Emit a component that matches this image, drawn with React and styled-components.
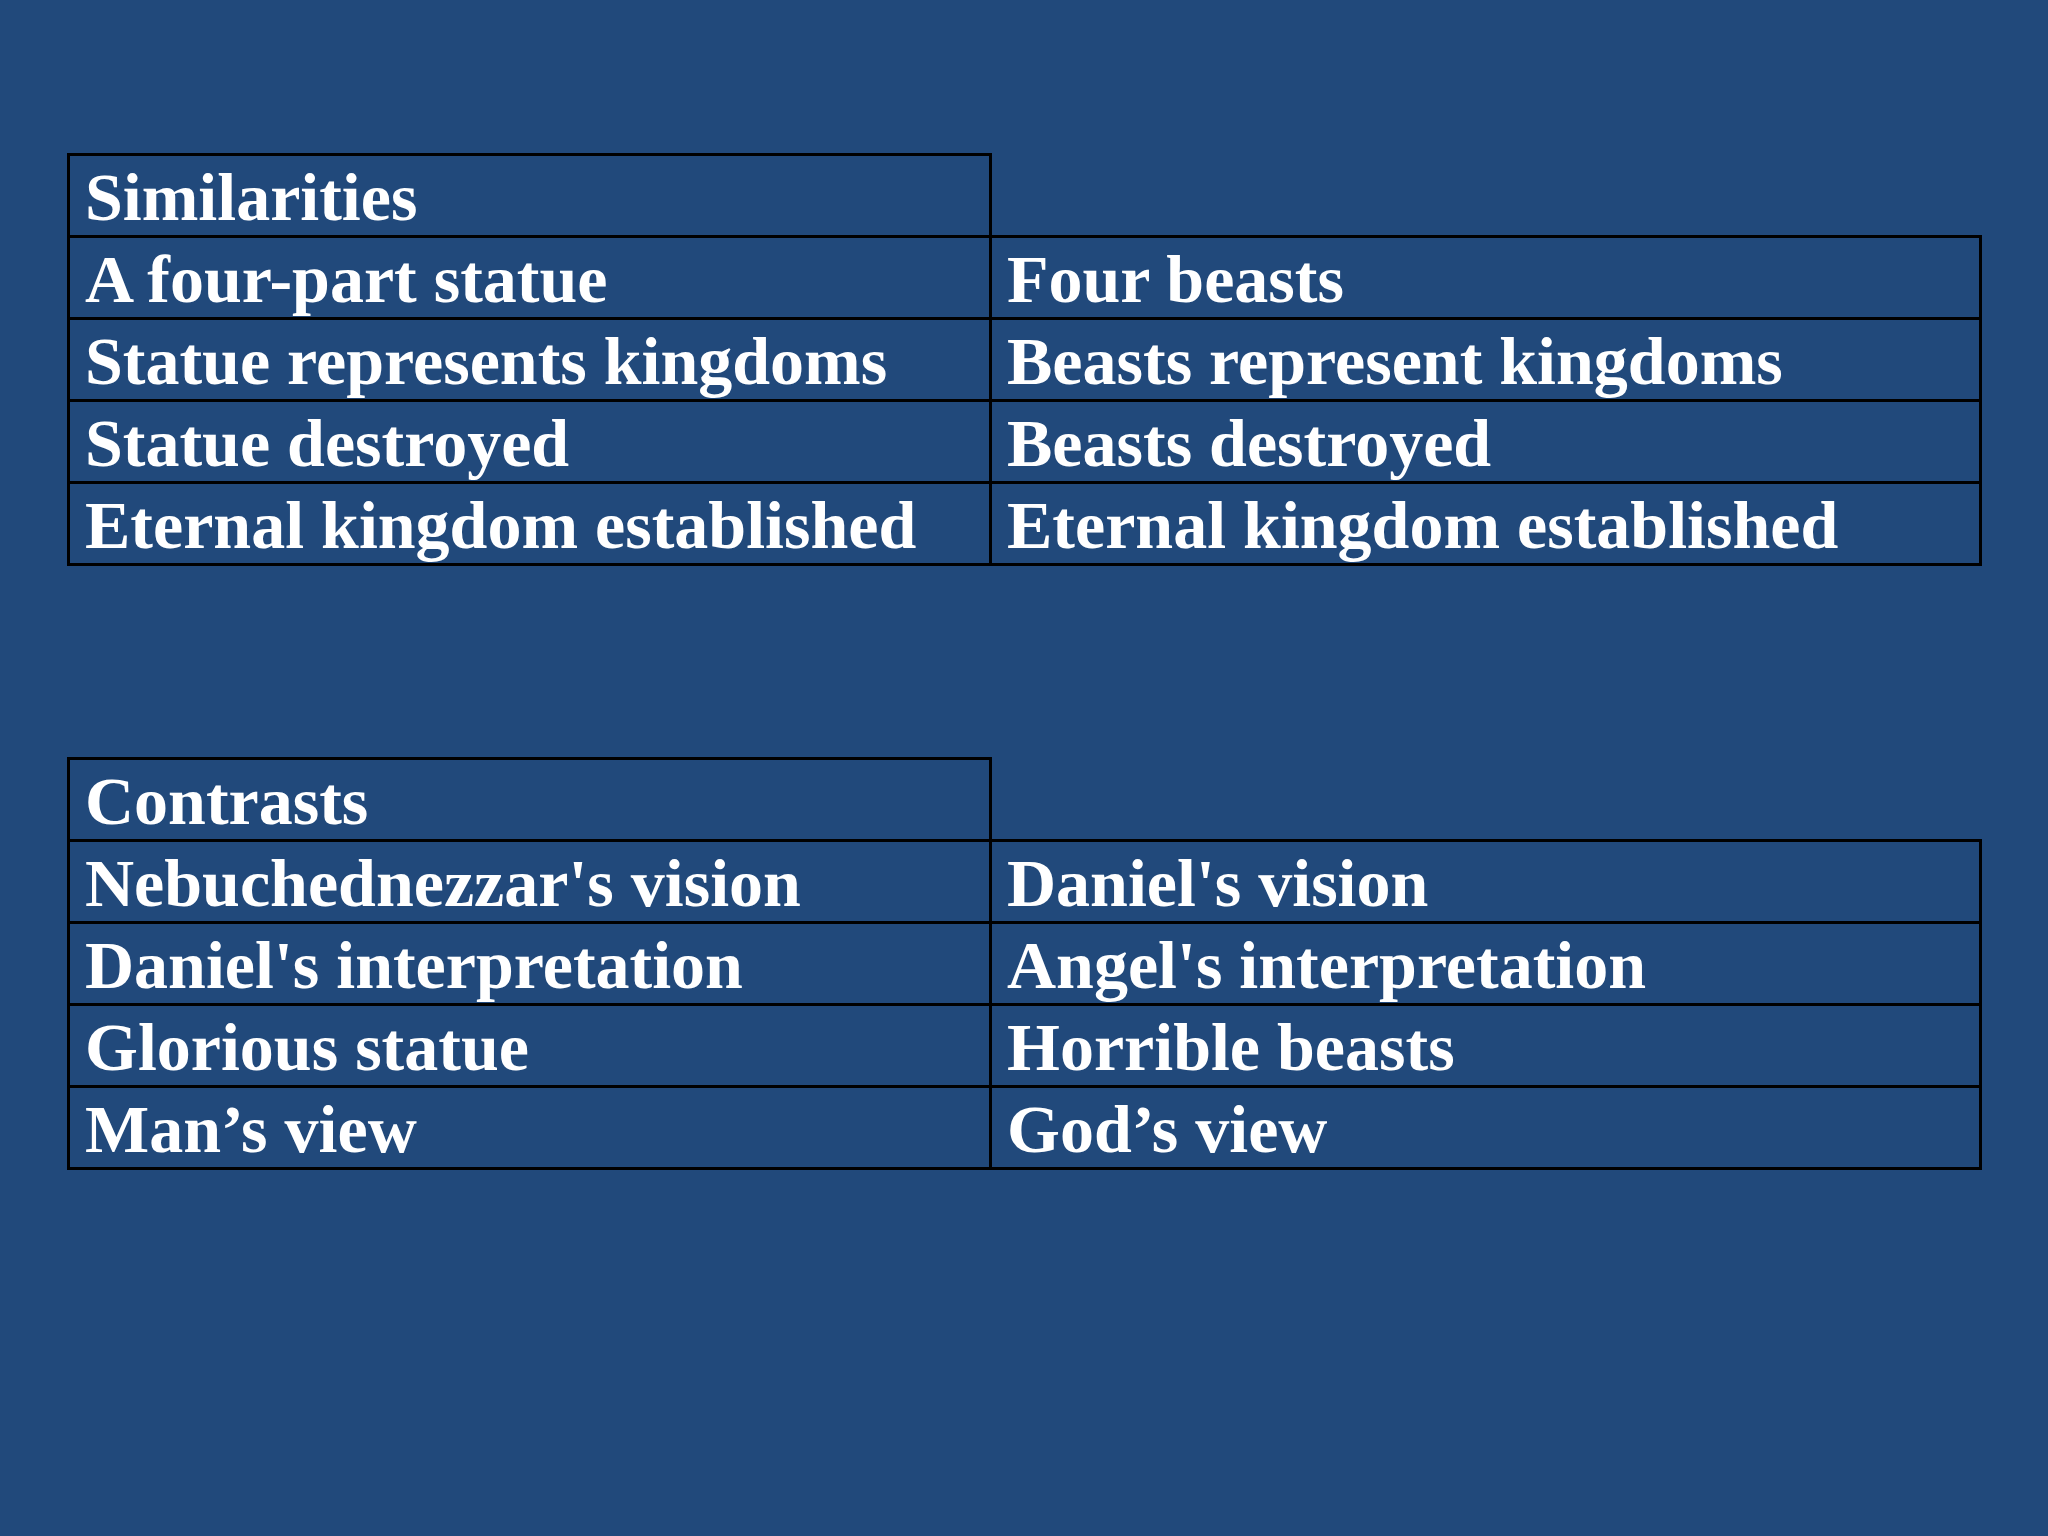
import React from 'react';
import styled, { createGlobalStyle } from 'styled-components';

const similarities = [
  ['A four-part statue', 'Four beasts'],
  ['Statue represents kingdoms', 'Beasts represent kingdoms'],
  ['Statue destroyed', 'Beasts destroyed'],
  ['Eternal kingdom established', 'Eternal kingdom established'],
];

const contrasts = [
  ["Nebuchednezzar's vision", "Daniel's vision"],
  ["Daniel's interpretation", "Angel's interpretation"],
  ['Glorious statue', 'Horrible beasts'],
  ['Man\u2019s view', 'God\u2019s view'],
];

const ComparisonTable = ({ title, rows, spaced }) => (
  <Table $spaced={spaced}>
    <colgroup>
      <col style={{ width: 922 }} />
      <col style={{ width: 990 }} />
    </colgroup>
    <tbody>
      <Row>
        <Cell>{title}</Cell>
        <EmptyCell />
      </Row>
      {rows.map(([left, right]) => (
        <Row key={left + right}>
          <Cell>{left}</Cell>
          <Cell>{right}</Cell>
        </Row>
      ))}
    </tbody>
  </Table>
);

const App = () => (
  <>
    <GlobalStyle />
    <Slide>
      <ComparisonTable title="Similarities" rows={similarities} />
      <ComparisonTable title="Contrasts" rows={contrasts} spaced />
    </Slide>
  </>
);

export default App;

const GlobalStyle = createGlobalStyle`
  html, body {
    margin: 0;
    padding: 0;
    background: #21497b;
  }
`;

const Slide = styled.div`
  width: 2048px;
  height: 1536px;
  box-sizing: border-box;
  padding: 153px 0 0 67px;
  background: #21497b;
  font-family: "Liberation Serif", "Times New Roman", serif;
  overflow: hidden;
`;

const Table = styled.table`
  border-collapse: collapse;
  table-layout: fixed;
  width: 1915px;
  margin-top: ${(p) => (p.$spaced ? '191px' : '0')};
`;

const Row = styled.tr`
  height: 82px;
`;

const Cell = styled.td`
  border: 3px solid #000;
  padding: 4px 0 0 15px;
  vertical-align: middle;
  color: #fff;
  font-size: 68px;
  font-weight: bold;
  line-height: 1.1;
  white-space: nowrap;
`;

const EmptyCell = styled.td`
  border: none;
`;
